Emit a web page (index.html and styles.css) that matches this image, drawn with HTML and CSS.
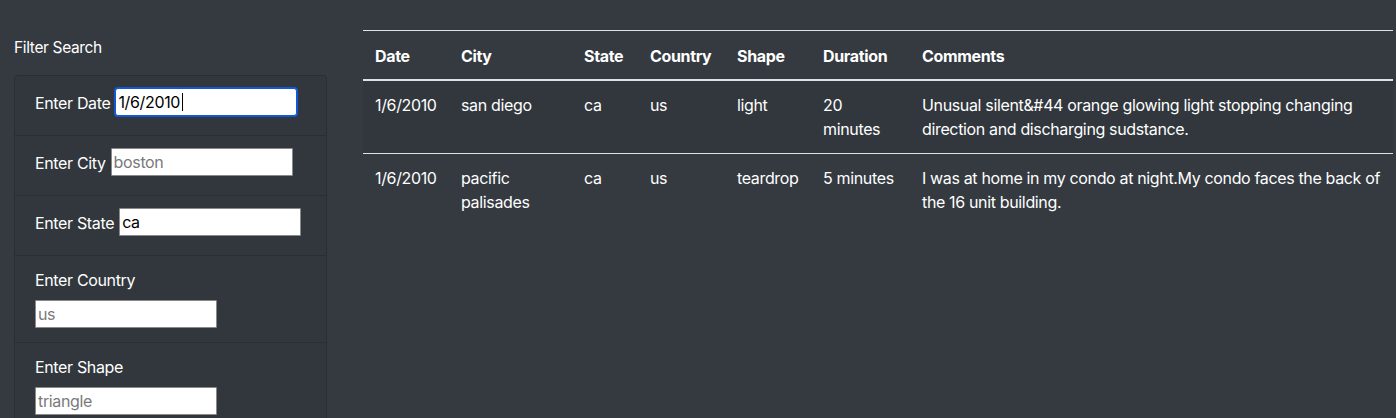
FILE: index.html
```html
<!DOCTYPE html>
<html lang="en">
<head>
<meta charset="utf-8">
<title>UFO Sightings</title>
<link rel="stylesheet" href="styles.css">
</head>
<body>
<div class="page">
  <aside class="sidebar">
    <p class="sidebar-title">Filter Search</p>
    <ul class="filters">
      <li class="filter filter-inline">
        <label class="filter-label" for="datetime">Enter Date</label>
        <span class="field"><input id="datetime" class="input input-active" type="text" value="1/6/2010"><span class="caret"></span></span>
      </li>
      <li class="filter filter-inline">
        <label class="filter-label" for="city">Enter City</label>
        <span class="field"><input id="city" class="input" type="text" placeholder="boston"></span>
      </li>
      <li class="filter filter-inline">
        <label class="filter-label" for="state">Enter State</label>
        <span class="field"><input id="state" class="input" type="text" value="ca"></span>
      </li>
      <li class="filter filter-stacked">
        <label class="filter-label" for="country">Enter Country</label>
        <span class="field"><input id="country" class="input" type="text" placeholder="us"></span>
      </li>
      <li class="filter filter-stacked">
        <label class="filter-label" for="shape">Enter Shape</label>
        <span class="field"><input id="shape" class="input" type="text" placeholder="triangle"></span>
      </li>
    </ul>
  </aside>
  <main class="results">
    <table class="ufo-table">
      <colgroup>
        <col class="col-date">
        <col class="col-city">
        <col class="col-state">
        <col class="col-country">
        <col class="col-shape">
        <col class="col-duration">
        <col class="col-comments">
      </colgroup>
      <thead>
        <tr>
          <th>Date</th>
          <th>City</th>
          <th>State</th>
          <th>Country</th>
          <th>Shape</th>
          <th>Duration</th>
          <th>Comments</th>
        </tr>
      </thead>
      <tbody>
        <tr class="row-striped">
          <td>1/6/2010</td>
          <td>san diego</td>
          <td>ca</td>
          <td>us</td>
          <td>light</td>
          <td>20 minutes</td>
          <td>Unusual silent&amp;#44 orange glowing light stopping changing direction and discharging sudstance.</td>
        </tr>
        <tr>
          <td>1/6/2010</td>
          <td>pacific palisades</td>
          <td>ca</td>
          <td>us</td>
          <td>teardrop</td>
          <td>5 minutes</td>
          <td>I was at home in my condo at night.My condo faces the back of the 16 unit building.</td>
        </tr>
      </tbody>
    </table>
  </main>
</div>
</body>
</html>
```

FILE: styles.css
```css
* {
  box-sizing: border-box;
}

html, body {
  margin: 0;
  background: #343a40;
}

body {
  color: #ffffff;
  font-family: Inter, "Noto Sans", "Liberation Sans", sans-serif;
  font-size: 16px;
  line-height: 1.5;
  letter-spacing: -0.35px;
}

.page {
  display: flex;
  align-items: flex-start;
  padding: 0 3px 0 14px;
  gap: 36px;
}

/* Sidebar */
.sidebar {
  flex: 0 0 313px;
  padding-top: 36px;
}

.sidebar-title {
  margin: 0 0 15px;
  line-height: 24px;
  font-size: 15.5px;
}

.filters {
  list-style: none;
  margin: 0;
  padding: 0;
  background: rgba(0, 0, 0, 0.05);
  border: 1px solid rgba(0, 0, 0, 0.14);
  border-radius: 4px;
}

.filter {
  padding: 12px 20px;
  border-bottom: 1px solid rgba(0, 0, 0, 0.14);
}

.filter-inline {
  display: flex;
  align-items: flex-start;
  gap: 5px;
}

.filter-inline .filter-label {
  line-height: 28px;
  margin-top: 1px;
  margin-bottom: 6px;
}

.filter-stacked {
  padding-bottom: 14px;
}

.filter-stacked .filter-label {
  display: block;
  line-height: 24px;
  margin-bottom: 8px;
}

.filter-label {
  white-space: nowrap;
}

.field {
  position: relative;
  display: block;
}

.input {
  display: block;
  width: 182px;
  height: 28px;
  margin: 0;
  padding: 1px 2px;
  border: 1px solid #8a8a8a;
  border-radius: 1px;
  background: #ffffff;
  color: #000000;
  font-family: inherit;
  font-size: 16px;
  letter-spacing: -0.35px;
  line-height: 24px;
  outline: none;
}

.filter-stacked .input {
  margin-top: 1px;
}

.input::placeholder {
  color: #7a7a7a;
  opacity: 1;
}

.input-active {
  border-color: #1058d6;
  border-radius: 3px;
  box-shadow: 0 0 0 1px #1058d6;
}

.caret {
  position: absolute;
  left: 67px;
  top: 5px;
  width: 1px;
  height: 18px;
  background: #000000;
}

/* Results table */
.results {
  flex: 1 1 auto;
  padding-top: 30px;
}

.ufo-table {
  width: 100%;
  table-layout: fixed;
  border-collapse: collapse;
}

.col-date { width: 86px; }
.col-city { width: 123px; }
.col-state { width: 66px; }
.col-country { width: 87px; }
.col-shape { width: 86px; }
.col-duration { width: 99px; }
.col-comments { width: auto; }

.ufo-table th,
.ufo-table td {
  padding: 12px 12px;
  text-align: left;
  vertical-align: top;
  border-top: 1px solid #dee2e6;
  line-height: 24px;
}

.ufo-table th {
  padding-top: 12.5px;
  padding-bottom: 11.5px;
  font-weight: 700;
  vertical-align: bottom;
  border-bottom: 2px solid #dee2e6;
}

.ufo-table td {
  font-weight: 400;
}

.row-striped {
  background: rgba(0, 0, 0, 0.05);
}
```
